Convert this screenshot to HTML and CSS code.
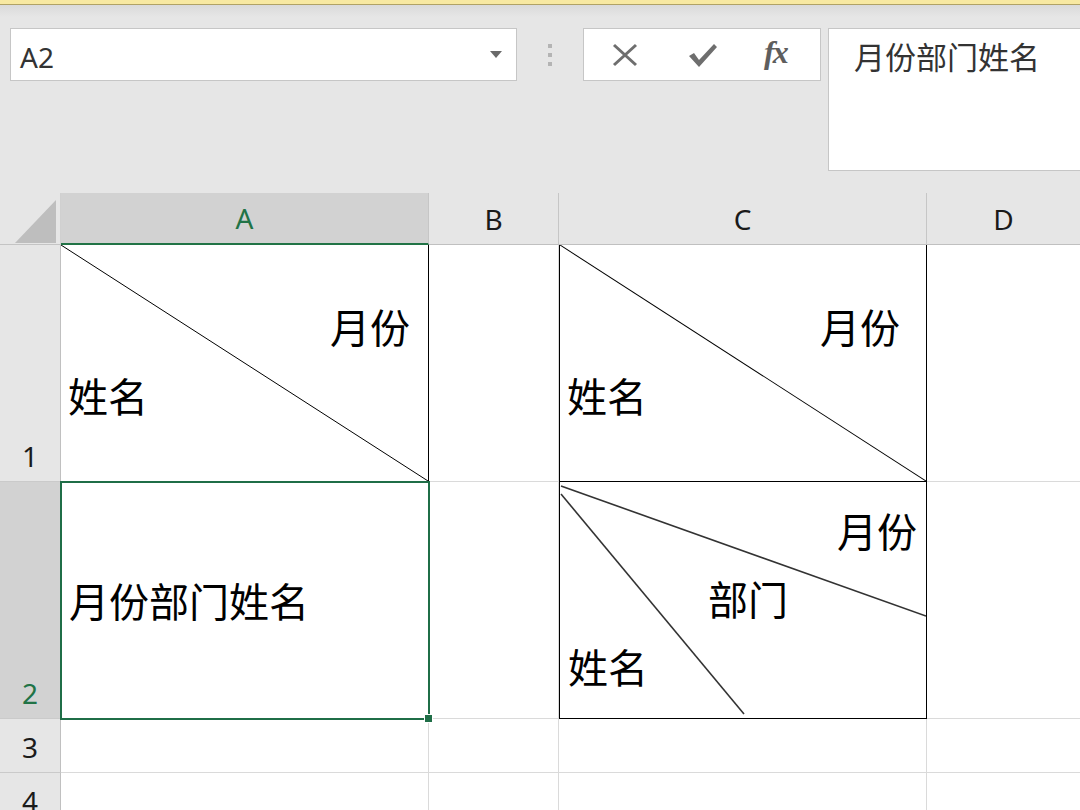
FILE: index.html
```html
<!DOCTYPE html>
<html>
<head>
    <meta charset="utf-8">
    <title>Excel - 斜线表头</title>
    <link rel="stylesheet" href="styles.css">
</head>
<body>

    <div class="titlebar"></div>

    <div class="formula-row">
        <div class="namebox">
            <span class="namebox-text">A2</span>
            <span class="namebox-arrow"></span>
        </div>
        <div class="grip">
            <span></span><span></span><span></span>
        </div>
        <div class="fx-buttons">
            <svg class="btn-icon" width="26" height="24" viewBox="0 0 26 24">
                <path d="M2 2 L24 22 M24 2 L2 22" stroke="#6e6e6e" stroke-width="3" fill="none"/>
            </svg>
            <svg class="btn-icon" width="30" height="26" viewBox="0 0 30 26">
                <path d="M1 14 L6 11 L11 18 L26 2 L29 5 L11 25 Z" fill="#6e6e6e"/>
            </svg>
            <span class="fx-label">fx</span>
        </div>
        <div class="formula-input">月份部门姓名</div>
    </div>

    <div class="sheet">
        <!-- header row -->
        <div class="corner"><span class="corner-tri"></span></div>
        <div class="col-head active">A</div>
        <div class="col-head">B</div>
        <div class="col-head">C</div>
        <div class="col-head last">D</div>

        <!-- row 1 -->
        <div class="row-head">1</div>
        <div class="cell slash a1">
            <svg class="diag" viewBox="0 0 100 100" preserveAspectRatio="none">
                <line x1="0" y1="0" x2="100" y2="100"/>
            </svg>
            <div class="lines two">
                <span class="to-right">月份</span>
                <span>姓名</span>
            </div>
        </div>
        <div class="cell"></div>
        <div class="cell slash c1">
            <svg class="diag" viewBox="0 0 100 100" preserveAspectRatio="none">
                <line x1="0" y1="0" x2="100" y2="100"/>
            </svg>
            <div class="lines two">
                <span class="to-right">月份</span>
                <span>姓名</span>
            </div>
        </div>
        <div class="cell last"></div>

        <!-- row 2 -->
        <div class="row-head active">2</div>
        <div class="cell selected">
            <div class="plain">月份部门姓名</div>
            <span class="fill-handle"></span>
        </div>
        <div class="cell"></div>
        <div class="cell slash c2">
            <svg class="diag" viewBox="0 0 366 236" preserveAspectRatio="none">
                <line class="thick" x1="1" y1="4" x2="366" y2="134"/>
                <line class="thick" x1="1" y1="12" x2="184" y2="232"/>
            </svg>
            <div class="lines three">
                <span class="to-right">月份</span>
                <span class="middle">部门</span>
                <span>姓名</span>
            </div>
        </div>
        <div class="cell last"></div>

        <!-- row 3 -->
        <div class="row-head">3</div>
        <div class="cell"></div>
        <div class="cell"></div>
        <div class="cell"></div>
        <div class="cell last"></div>

        <!-- row 4 -->
        <div class="row-head">4</div>
        <div class="cell"></div>
        <div class="cell"></div>
        <div class="cell"></div>
        <div class="cell last"></div>
    </div>

</body>
</html>
```

FILE: styles.css
```css
html, body {
    height: 100%; width: 100%;
}
body {
    margin: 0;
    background: #E6E6E6;
    overflow: hidden;
    font-family: "Noto Sans", "Noto Sans CJK SC", sans-serif;
}

.titlebar {
    height: 4px;
    background: #F8E9A2;
    border-bottom: 1px solid #B0A266;
}

.formula-row {
    display: flex;
    align-items: flex-start;
    padding: 23px 0 0 10px;
    height: 165px;
    box-sizing: border-box;
    background: linear-gradient(#DADADA, #E6E6E6 12px);
}
.namebox {
    display: flex;
    align-items: center;
    justify-content: space-between;
    width: 507px; height: 53px;
    box-sizing: border-box;
    background: #FFF;
    border: 1px solid #C6C6C6;
    padding: 0 14px 0 9px;
}
.namebox-text {
    font-size: 28px;
    color: #333;
    margin-top: 4px;
}
.namebox-arrow {
    width: 0; height: 0;
    border-left: 6px solid transparent;
    border-right: 6px solid transparent;
    border-top: 7px solid #6A6A6A;
}
.grip {
    width: 66px; height: 53px;
    display: flex;
    flex-direction: column;
    align-items: center;
    justify-content: center;
    gap: 5px;
}
.grip span {
    width: 4px; height: 4px;
    background: #B4B4B4;
}
.fx-buttons {
    display: flex;
    align-items: center;
    width: 238px; height: 53px;
    box-sizing: border-box;
    background: #FFF;
    border: 1px solid #C6C6C6;
    padding: 0 0 0 28px;
    gap: 50px;
}
.btn-icon {
    display: block;
}
.fx-label {
    font-family: "Liberation Serif", "DejaVu Serif", serif;
    font-style: italic;
    font-weight: bold;
    font-size: 32px;
    color: #5E5E5E;
    letter-spacing: -2px;
    margin: -4px 0 0 -4px;
}
.formula-input {
    flex: 1;
    height: 143px;
    margin-left: 7px;
    box-sizing: border-box;
    background: #FFF;
    border: 1px solid #C6C6C6;
    border-right: 0;
    padding: 5px 0 0 25px;
    font-family: "Noto Sans CJK SC", sans-serif;
    font-size: 31px;
    line-height: 44px;
    color: #333;
}

.sheet {
    display: grid;
    margin-top: 23px;
    grid-template-columns: 61px 368px 130px 368px 1fr;
    grid-template-rows: 52px 237px 237px 54px 54px;
    background: #FFF;
}
.corner {
    background: #E6E6E6;
    border-bottom: 1px solid #C4C4C4;
    border-right: 1px solid #D0D0D0;
    box-sizing: border-box;
    position: relative;
}
.corner-tri {
    position: absolute;
    left: 15px; top: 7px;
    width: 0; height: 0;
    border-left: 41px solid transparent;
    border-bottom: 43px solid #BEBEBE;
}
.col-head {
    display: flex;
    align-items: center;
    justify-content: center;
    background: #E6E6E6;
    border-right: 1px solid #C6C6C6;
    border-bottom: 1px solid #C0C0C0;
    box-sizing: border-box;
    font-size: 28px;
    color: #1A1A1A;
}
.col-head.active {
    background: #D2D2D2;
    color: #217346;
    border-bottom: 2px solid #217346;
}
.col-head.last, .cell.last {
    border-right: 0;
}
.row-head {
    display: flex;
    align-items: flex-end;
    justify-content: center;
    background: #E6E6E6;
    border-right: 1px solid #C0C0C0;
    border-bottom: 1px solid #CACACA;
    box-sizing: border-box;
    padding-bottom: 11px;
    font-size: 28px;
    line-height: 28px;
    color: #1A1A1A;
}
.row-head.active {
    background: #D2D2D2;
    color: #217346;
}

.cell {
    position: relative;
    border-right: 1px solid #DADADA;
    border-bottom: 1px solid #DADADA;
    box-sizing: border-box;
    font-family: "Noto Sans CJK SC", sans-serif;
    font-size: 40px;
    color: #000;
}
.cell.a1 {
    border-right-color: #000;
    border-bottom-color: #000;
}
.cell.c1, .cell.c2 {
    border: 1px solid #000;
    border-top: 0;
}
.diag {
    position: absolute;
    top: 0; left: 0;
    width: 100%; height: 100%;
}
.diag line {
    stroke: #000;
    stroke-width: 1;
    vector-effect: non-scaling-stroke;
}
.diag line.thick {
    stroke: #333;
    stroke-width: 1.6;
}
.lines {
    position: relative;
    display: flex;
    flex-direction: column;
    align-items: flex-start;
}
.lines .to-right {
    align-self: flex-end;
}
.lines.two {
    line-height: 69px;
    padding: 47px 18px 0 7px;
}
.c1 .lines.two {
    padding-right: 26px;
}
.lines.three {
    line-height: 68px;
    padding: 14px 9px 0 8px;
}
.lines .middle {
    margin-left: 140px;
}

.cell.selected {
    z-index: 1;
    outline: 2px solid #1F6E47;
    outline-offset: -1px;
    display: flex;
    align-items: center;
}
.plain {
    padding: 0 0 0 8px;
}
.fill-handle {
    position: absolute;
    right: -5px; bottom: -5px;
    width: 7px; height: 7px;
    background: #1F6E47;
    border: 1px solid #FFF;
}
```
